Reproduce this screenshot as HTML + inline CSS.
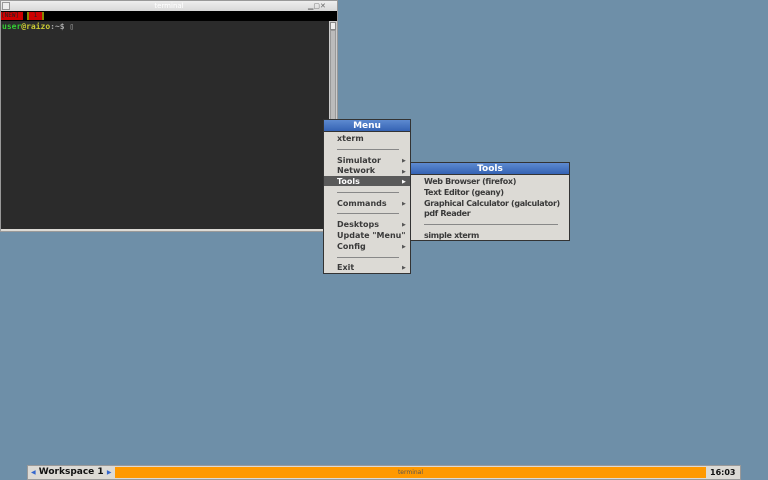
<!DOCTYPE html><html><head><style>
*{margin:0;padding:0;box-sizing:border-box}
body{width:768px;height:480px;background:#6e8fa8;position:relative;overflow:hidden;font-family:"DejaVu Sans","Liberation Sans",sans-serif}
.a{position:absolute;white-space:nowrap}
.menu{background:#dcdad5;border:1px solid #333;}
.mt{background:linear-gradient(#5d8ad0,#3563b4);color:#fff;font-weight:bold;font-size:9px;text-align:center;height:12px;line-height:12px;border-bottom:1px solid #333}
.it{position:absolute;white-space:nowrap;font-size:8px;font-weight:bold;color:#3a3a3a;height:11px;line-height:11px}
.sub .it{letter-spacing:-0.35px}
.ar{position:absolute;font-size:5px;color:#555}
.sep{position:absolute;height:1px;background:#888}
</style></head><body>
<div class="a" style="left:0;top:0;width:338px;height:232px;background:#dcdad5;border:1px solid #999"></div>
<div class="a" style="top:1px;left:1px;width:336px;height:10px;background:linear-gradient(#eee,#d8d8d8);font-size:7px;color:#fff;text-align:center;line-height:10px">terminal</div>
<div class="a" style="left:2px;top:2px;width:8px;height:8px;border:1px solid #999;background:#eee"></div>
<div class="a" style="left:308px;top:2px;width:28px;height:8px;font-size:7px;color:#666;line-height:8px">▁▢✕</div>
<div class="a" style="left:1px;top:11px;width:336px;height:10px;background:#000"></div>
<div class="a" style="left:1px;top:12px;width:22px;height:8px;background:#c00;font-size:6px;color:#222;line-height:8px;font-family:'DejaVu Sans Mono',monospace">[NEW]</div>
<div class="a" style="left:27px;top:12px;width:17px;height:8px;background:#c00;border-left:2px solid #880;border-right:2px solid #880;font-size:6px;color:#222;text-align:center;line-height:8px">1</div>
<div class="a" style="left:1px;top:21px;width:328px;height:208px;background:#2b2b2b"></div>
<div class="a" style="left:2px;top:22px;font-size:8px;font-weight:bold;font-family:'DejaVu Sans Mono',monospace;line-height:9px"><span style="color:#3c3">user</span><span style="color:#cc3">@raizo</span><span style="color:#aaa">:~$ ▯</span></div>
<div class="a" style="left:329px;top:21px;width:8px;height:208px;background:#ccc"></div>
<div class="a" style="left:330px;top:22px;width:6px;height:8px;background:#eee;border:1px solid #888"></div>
<div class="a" style="left:330px;top:30px;width:6px;height:199px;background:#bbb;border:1px solid #999"></div>
<div class="a menu" style="left:323px;top:119px;width:88px;height:155px">
<div class="mt">Menu</div>
<div class="a" style="left:0;top:56px;width:86px;height:10px;background:#5a5a5a"></div>
<div class="it" style="left:13px;top:13px">xterm</div>
<div class="sep" style="left:13px;top:29px;width:62px"></div>
<div class="it" style="left:13px;top:35px">Simulator</div><div class="ar" style="left:78px;top:38px">▶</div>
<div class="it" style="left:13px;top:45px">Network</div><div class="ar" style="left:78px;top:49px">▶</div>
<div class="it" style="left:13px;top:56px;color:#fff">Tools</div><div class="ar" style="left:78px;top:59px;color:#fff">▶</div>
<div class="sep" style="left:13px;top:72px;width:62px"></div>
<div class="it" style="left:13px;top:78px">Commands</div><div class="ar" style="left:78px;top:81px">▶</div>
<div class="sep" style="left:13px;top:93px;width:62px"></div>
<div class="it" style="left:13px;top:99px">Desktops</div><div class="ar" style="left:78px;top:102px">▶</div>
<div class="it" style="left:13px;top:110px">Update "Menu"</div>
<div class="it" style="left:13px;top:121px">Config</div><div class="ar" style="left:78px;top:124px">▶</div>
<div class="sep" style="left:13px;top:137px;width:62px"></div>
<div class="it" style="left:13px;top:142px">Exit</div><div class="ar" style="left:78px;top:145px">▶</div>
</div>
<div class="a menu sub" style="left:410px;top:162px;width:160px;height:79px">
<div class="mt">Tools</div>
<div class="it" style="left:13px;top:13px">Web Browser (firefox)</div>
<div class="it" style="left:13px;top:24px">Text Editor (geany)</div>
<div class="it" style="left:13px;top:35px">Graphical Calculator (galculator)</div>
<div class="it" style="left:13px;top:45px">pdf Reader</div>
<div class="sep" style="left:13px;top:61px;width:134px"></div>
<div class="it" style="left:13px;top:67px">simple xterm</div>
</div>
<div class="a" style="left:27px;top:465px;width:714px;height:15px;background:#dcdad5;border:1px solid #999"></div>
<div class="a" style="left:31px;top:466px;font-size:9px;font-weight:bold;color:#111;line-height:13px"><span style="color:#36c;font-size:6px">◀</span> Workspace 1 <span style="color:#36c;font-size:6px">▶</span></div>
<div class="a" style="left:115px;top:467px;width:591px;height:11px;background:#f90;font-size:6px;color:#555;text-align:center;line-height:11px">terminal</div>
<div class="a" style="left:710px;top:466px;font-size:8px;font-weight:bold;color:#111;line-height:13px">16:03</div>
</body></html>
